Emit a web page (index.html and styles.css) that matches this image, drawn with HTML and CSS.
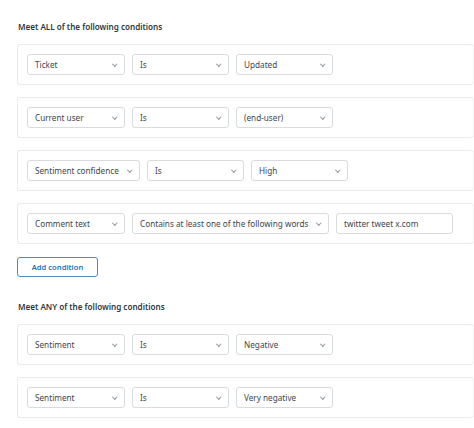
FILE: index.html
```html
<!DOCTYPE html>
<html>
<head>
<meta charset="utf-8">
<link rel="stylesheet" href="styles.css">
</head>
<body>
<div class="page">
  <h2 class="heading">Meet ALL of the following conditions</h2>
  <div class="cards">
    <div class="card">
      <div class="select w98"><span>Ticket</span><i class="chev"></i></div>
      <div class="select w97"><span>Is</span><i class="chev"></i></div>
      <div class="select w97"><span>Updated</span><i class="chev"></i></div>
    </div>
    <div class="card">
      <div class="select w98"><span>Current user</span><i class="chev"></i></div>
      <div class="select w97"><span>Is</span><i class="chev"></i></div>
      <div class="select w97"><span>(end-user)</span><i class="chev"></i></div>
    </div>
    <div class="card">
      <div class="select w113"><span>Sentiment confidence</span><i class="chev"></i></div>
      <div class="select w97"><span>Is</span><i class="chev"></i></div>
      <div class="select w97"><span>High</span><i class="chev"></i></div>
    </div>
    <div class="card">
      <div class="select w98"><span>Comment text</span><i class="chev"></i></div>
      <div class="select w197"><span>Contains at least one of the following words</span><i class="chev"></i></div>
      <div class="input w117">twitter tweet x.com</div>
    </div>
  </div>
  <button class="add">Add condition</button>
  <h2 class="heading second">Meet ANY of the following conditions</h2>
  <div class="cards">
    <div class="card">
      <div class="select w98"><span>Sentiment</span><i class="chev"></i></div>
      <div class="select w97"><span>Is</span><i class="chev"></i></div>
      <div class="select w97"><span>Negative</span><i class="chev"></i></div>
    </div>
    <div class="card">
      <div class="select w98"><span>Sentiment</span><i class="chev"></i></div>
      <div class="select w97"><span>Is</span><i class="chev"></i></div>
      <div class="select w97"><span>Very negative</span><i class="chev"></i></div>
    </div>
  </div>
</div>
</body>
</html>
```
FILE: styles.css
```css
html, body {
  margin: 0;
  padding: 0;
  background: #ffffff;
}
body {
  font-family: "Noto Sans", "Open Sans", sans-serif;
  color: #3d464d;
  font-size: 8.2px;
  overflow: hidden;
}
.page {
  padding: 20px 0 0 17px;
  width: 457px;
}
.heading {
  margin: 0 0 10px 1px;
  font-size: 8.1px;
  line-height: 14px;
  font-weight: 600;
  color: #2f3941;
}
.heading.second {
  margin-top: 23px;
}
.cards {
  display: flex;
  flex-direction: column;
  gap: 12px;
}
.card {
  display: flex;
  gap: 7px;
  padding: 9px 9px;
  border: 1px solid #e9ebed;
  border-right-color: #f3f4f5;
  border-radius: 3px;
  height: 21px;
}
.select, .input {
  box-sizing: border-box;
  height: 21px;
  border: 1px solid #d8dcde;
  border-radius: 3px;
  display: flex;
  align-items: center;
  justify-content: space-between;
  padding: 0 8px 0 7px;
  white-space: nowrap;
  color: #3d464d;
}
.input {
  justify-content: flex-start;
}
.chev {
  display: block;
  flex: none;
  width: 2.5px;
  height: 2.5px;
  border-right: 1px solid #8c969e;
  border-bottom: 1px solid #8c969e;
  transform: rotate(45deg);
  margin: -2px 0 0 4px;
}
.w97 { width: 97px; }
.w98 { width: 98px; }
.w113 { width: 113px; }
.w197 { width: 197px; }
.w117 { width: 117px; }
.add {
  margin-top: 13px;
  width: 81px;
  height: 20px;
  border: 1px solid #4a8ac4;
  border-radius: 3px;
  background: #ffffff;
  color: #1f73b7;
  font-family: "Noto Sans", "Open Sans", sans-serif;
  font-size: 7.6px;
  font-weight: 600;
  padding: 0;
  display: block;
}
```
